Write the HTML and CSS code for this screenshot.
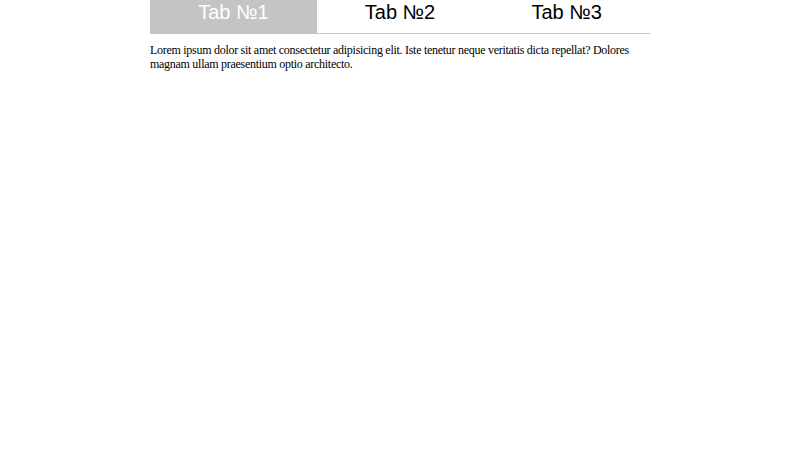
FILE: index.html
```html
<!DOCTYPE html>
<html lang="en">
<head>
    <meta charset="UTF-8">
    <meta name="viewport" content="width=device-width, initial-scale=1.0">
    <title>Tabs</title>
    <link rel="stylesheet" href="styles.css">
</head>
<body>
    <div class="tabs">
        <div class="tab-list">
            <button class="tab active">Tab №1</button>
            <button class="tab">Tab №2</button>
            <button class="tab">Tab №3</button>
        </div>
        <div class="tab-content">
            <p>Lorem ipsum dolor sit amet consectetur adipisicing elit. Iste tenetur neque veritatis dicta repellat? Dolores magnam ullam praesentium optio architecto.</p>
        </div>
    </div>
</body>
</html>
```

FILE: styles.css
```css
* {
    margin: 0;
    padding: 0;
    box-sizing: border-box;
}
body {
    background: #fff;
    font-family: "Liberation Serif", serif;
}
.tabs {
    width: 500px;
    margin: 0 auto;
}
.tab-list {
    display: flex;
    border-bottom: 1px solid #c4c4c4;
}
.tab {
    flex: 1;
    height: 33px;
    border: none;
    background: #fff;
    color: #000;
    font-family: "Liberation Sans", Arial, sans-serif;
    font-size: 20px;
    line-height: 24px;
    padding-bottom: 9px;
    cursor: pointer;
}
.tab.active {
    background: #c4c4c4;
    color: #fff;
}
.tab-content {
    padding-top: 9px;
    font-size: 12px;
    letter-spacing: -0.28px;
    line-height: 14px;
    color: #000;
}
```
